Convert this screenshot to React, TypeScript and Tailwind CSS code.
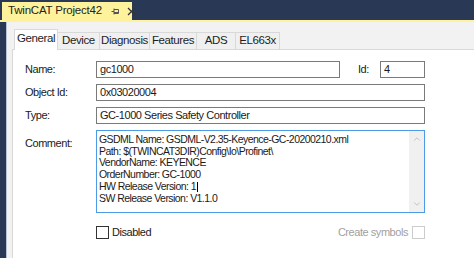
import { ChevronDown, ChevronUp } from "lucide-react";

const font = { fontFamily: '"Liberation Sans", Arial, sans-serif' };

const tabs = ["General", "Device", "Diagnosis", "Features", "ADS", "EL663x"];
const tabWidths = ["w-[44px]", "w-[42px]", "w-[50px]", "w-[47px]", "w-[39px]", "w-[44px]"];

const comment = [
  "GSDML Name: GSDML-V2.35-Keyence-GC-20200210.xml",
  "Path: $(TWINCAT3DIR)Config\\Io\\Profinet\\",
  "VendorName: KEYENCE",
  "OrderNumber: GC-1000",
  "HW Release Version: 1",
  "SW Release Version: V1.1.0",
];

function Field({ value, className = "" }: { value: string; className?: string }) {
  return (
    <div
      className={`h-[17px] border border-[#7a7a7a] bg-white pl-[3px] flex items-center text-[11px] tracking-[-0.45px] text-[#1a1a1a] whitespace-nowrap ${className}`}
    >
      {value}
    </div>
  );
}

export default function App() {
  return (
    <div
      className="w-[474px] h-[258px] bg-[#293955] flex flex-col overflow-hidden select-none"
      style={font}
    >
      {/* document tab */}
      <div className="h-[20px] flex shrink-0">
        <div className="ml-[2px] mt-[2px] w-[130px] shrink-0 bg-[#fff29d] flex items-center pl-[6px] text-[11.5px] tracking-[-0.2px] text-[#1e1e1e] whitespace-nowrap">
          <span>TwinCAT Project42</span>
          <svg width="9" height="9" viewBox="0 0 9 9" className="ml-[9px] shrink-0">
            <path d="M0.5 4.5h2.5M3 1.5v6M3 2.5h4.5v4H3M3 5.5h4.5" stroke="#555" strokeWidth="1" fill="none" />
          </svg>
          <svg width="9" height="9" viewBox="0 0 9 9" className="ml-[7px] shrink-0">
            <path d="M1 1l7 7M8 1l-7 7" stroke="#333" strokeWidth="1.3" fill="none" />
          </svg>
        </div>
      </div>
      <div className="h-[2px] bg-[#fff29d] shrink-0" />

      <div className="flex-1 flex min-h-0">
        <div className="w-[6px] shrink-0" />
        <div className="flex-1 bg-[#f2f2f2] border-l border-[#b8c2d2] pl-[5px] pt-[7px] flex flex-col">
          {/* tab strip */}
          <div className="h-[21px] flex items-end text-[11.5px] tracking-[-0.4px] text-[#1e1e1e]">
            <div className="w-[2px] h-[18px] border-b border-[#d9d9d9]" />
            {tabs.map((t, i) =>
              i === 0 ? (
                <div
                  key={t}
                  className={`${tabWidths[i]} h-[21px] bg-white border border-b-0 border-[#d9d9d9] flex items-center justify-center pb-[2px]`}
                >
                  {t}
                </div>
              ) : (
                <div
                  key={t}
                  className={`${tabWidths[i]} h-[18px] bg-[#f0f0f0] border border-l-0 border-[#d9d9d9] flex items-center justify-center`}
                >
                  {t}
                </div>
              )
            )}
            <div className="flex-1 h-[18px] border-b border-[#d9d9d9]" />
          </div>

          {/* page */}
          <div className="flex-1 bg-white border-l border-[#d9d9d9] pl-[12px] pt-[11px] text-[11px] tracking-[-0.45px] text-[#1a1a1a]">
            <div className="flex items-center h-[17px]">
              <div className="w-[71px]">Name:</div>
              <Field value="gc1000" className="w-[244px]" />
              <div className="ml-[18px] w-[22px]">Id:</div>
              <Field value="4" className="w-[45px]" />
            </div>
            <div className="flex items-center h-[17px] mt-[6px]">
              <div className="w-[71px]">Object Id:</div>
              <Field value="0x03020004" className="w-[329px]" />
            </div>
            <div className="flex items-center h-[17px] mt-[6px]">
              <div className="w-[71px]">Type:</div>
              <Field value="GC-1000 Series Safety Controller" className="w-[329px]" />
            </div>
            <div className="flex mt-[6px]">
              <div className="w-[71px] pt-[5px]">Comment:</div>
              <div className="w-[329px] h-[83px] border border-[#4d9be6] bg-white flex">
                <div className="flex-1 pl-[2px] pt-[3px] leading-[11.7px] text-[10.5px] tracking-[-0.55px] whitespace-nowrap">
                  {comment.map((l, i) => (
                    <div key={i} className="flex items-center">
                      {l}
                      {i === 4 && <span className="inline-block w-px h-[10px] bg-black ml-[1px]" />}
                    </div>
                  ))}
                </div>
                <div className="w-[15px] bg-[#f0f0f0] flex flex-col justify-between items-center py-[3px] text-[#a6a6a6]">
                  <ChevronUp size={10} strokeWidth={1.5} />
                  <ChevronDown size={10} strokeWidth={1.5} />
                </div>
              </div>
            </div>
            <div className="flex items-center mt-[11px] w-[400px]">
              <div className="w-[71px]" />
              <div className="w-[13px] h-[13px] border border-[#333] bg-white" />
              <div className="ml-[3px]">Disabled</div>
              <div className="flex-1" />
              <div className="text-[#a0a0a0]">Create symbols</div>
              <div className="ml-[4px] w-[13px] h-[13px] border border-[#cccccc] bg-white" />
            </div>
          </div>
        </div>
      </div>
    </div>
  );
}
